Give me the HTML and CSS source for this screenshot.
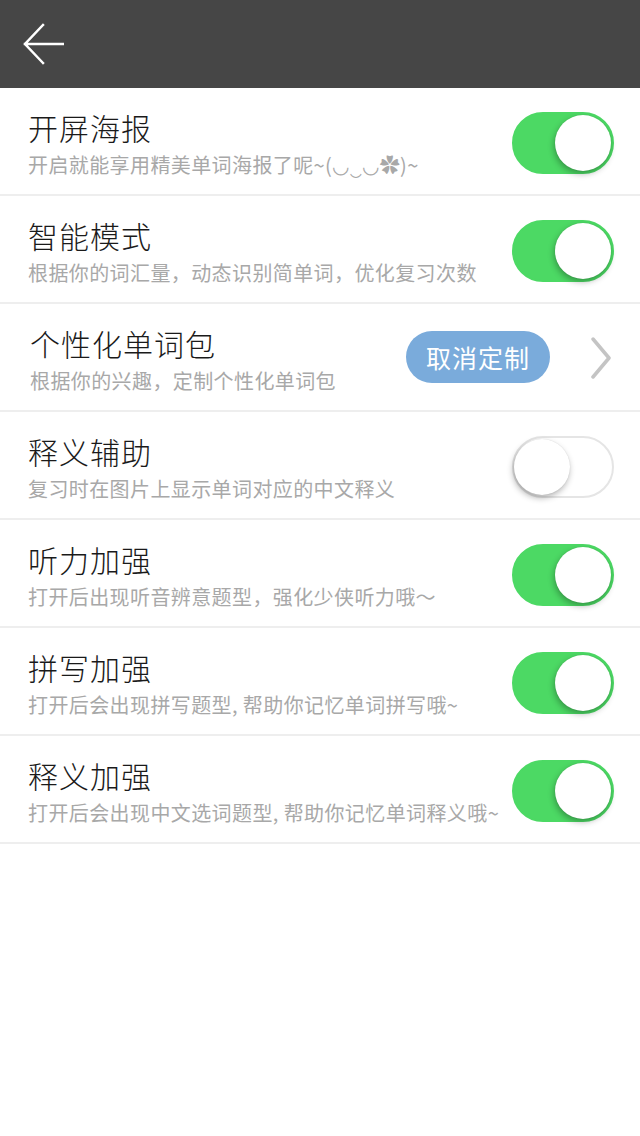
FILE: index.html
```html
<!DOCTYPE html>
<html lang="zh">
<head>
<meta charset="utf-8">
<link rel="stylesheet" href="styles.css">
</head>
<body>
<header class="topbar">
  <svg class="back" width="64" height="88" viewBox="0 0 64 88">
    <path d="M43 25 L25 44 L43 63 M25 44 L64 44" fill="none" stroke="#fff" stroke-width="2.5" stroke-linecap="square"/>
  </svg>
</header>
<main class="list">
  <div class="row">
    <div class="text"><div class="title">开屏海报</div><div class="sub">开启就能享用精美单词海报了呢~(◡‿◡✿)~</div></div>
    <div class="toggle on"><span class="knob"></span></div>
  </div>
  <div class="row">
    <div class="text"><div class="title">智能模式</div><div class="sub">根据你的词汇量，动态识别简单词，优化复习次数</div></div>
    <div class="toggle on"><span class="knob"></span></div>
  </div>
  <div class="row row-custom">
    <div class="text"><div class="title">个性化单词包</div><div class="sub">根据你的兴趣，定制个性化单词包</div></div>
    <div class="btn">取消定制</div>
    <svg class="chev" width="22" height="42" viewBox="0 0 22 42"><path d="M3 2 L19 21 L3 40" fill="none" stroke="#c4c4c4" stroke-width="3.5" stroke-linecap="round" stroke-linejoin="round"/></svg>
  </div>
  <div class="row">
    <div class="text"><div class="title">释义辅助</div><div class="sub">复习时在图片上显示单词对应的中文释义</div></div>
    <div class="toggle"><span class="knob"></span></div>
  </div>
  <div class="row">
    <div class="text"><div class="title">听力加强</div><div class="sub">打开后出现听音辨意题型，强化少侠听力哦～</div></div>
    <div class="toggle on"><span class="knob"></span></div>
  </div>
  <div class="row">
    <div class="text"><div class="title">拼写加强</div><div class="sub">打开后会出现拼写题型, 帮助你记忆单词拼写哦~</div></div>
    <div class="toggle on"><span class="knob"></span></div>
  </div>
  <div class="row">
    <div class="text"><div class="title">释义加强</div><div class="sub">打开后会出现中文选词题型, 帮助你记忆单词释义哦~</div></div>
    <div class="toggle on"><span class="knob"></span></div>
  </div>
</main>
</body>
</html>
```
FILE: styles.css
```css
* { box-sizing: border-box; }
html, body { margin: 0; padding: 0; background: #fff; }
body {
  width: 640px;
  height: 1136px;
  font-family: "Noto Sans CJK SC", "Noto Sans", sans-serif;
  overflow: hidden;
}
.topbar {
  height: 88px;
  background: #464646;
  display: flex;
  align-items: flex-start;
}
.back { display: block; }
.list { display: flex; flex-direction: column; }
.row {
  height: 108px;
  border-bottom: 2px solid #eeeeee;
  display: flex;
  align-items: flex-start;
  padding: 0 26px 0 28px;
}
.text { flex: 1; padding-top: 19px; min-width: 0; }
.title {
  font-size: 30px;
  font-weight: 300;
  line-height: 40px;
  color: #1a1a1a;
  letter-spacing: 1px;
}
.sub {
  font-size: 20px;
  line-height: 26px;
  margin-top: 5px;
  color: #a8a8a8;
  letter-spacing: 0.4px;
  white-space: nowrap;
}
.toggle {
  flex: none;
  margin-top: 24px;
  width: 102px;
  height: 62px;
  border-radius: 31px;
  background: #fff;
  border: 2px solid #e5e5e5;
  position: relative;
}
.toggle.on { background: #4cd964; border-color: #4cd964; }
.knob {
  position: absolute;
  top: 1px;
  left: 0;
  width: 56px;
  height: 56px;
  border-radius: 50%;
  background: #fff;
  box-shadow: -1px 3px 6px rgba(0,0,0,0.3), 0 0 1px rgba(0,0,0,0.15);
}
.toggle.on .knob { left: 41px; }
.row-custom { padding-left: 30px; padding-right: 28px; align-items: flex-start; }
.btn {
  flex: none;
  margin-top: 27px;
  width: 144px;
  height: 52px;
  border-radius: 26px;
  background: #7aabdb;
  color: #fff;
  font-size: 25px;
  line-height: 52px;
  text-align: center;
  letter-spacing: 1px;
}
.chev { flex: none; margin-top: 33px; margin-left: 40px; display: block; }
```
